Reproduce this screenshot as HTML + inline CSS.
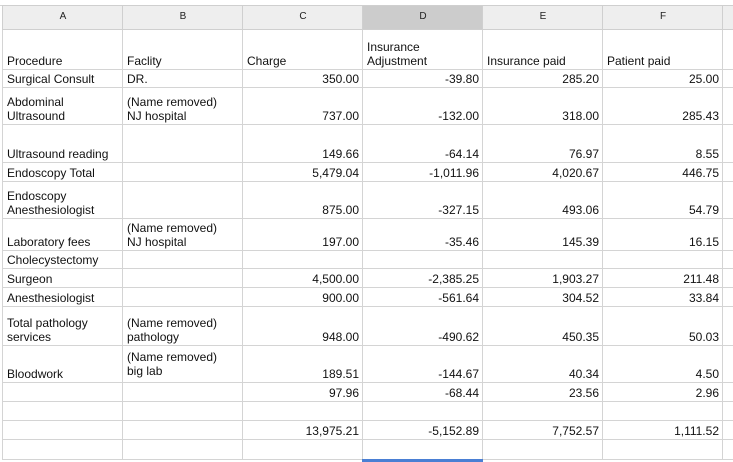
<!DOCTYPE html>
<html><head><meta charset="utf-8"><style>
html,body{margin:0;padding:0;background:#fff;width:733px;height:462px;overflow:hidden;font-family:"Liberation Sans",Arial,sans-serif;font-size:12px;color:#111}
table{position:absolute;left:2px;top:5px;border-collapse:collapse;table-layout:fixed;width:750px}
td{border:1px solid #d4d4d4;padding:0 3px 1px 4px;vertical-align:bottom;line-height:14px;white-space:nowrap;overflow:hidden}
td.n{text-align:right;padding-right:3px}
tr.h td{background:#eeeeee;text-align:center;vertical-align:middle;font-size:10px;color:#222;border-color:#cfcfcf}
tr.h td.sel{background:#cccccc}
.top{position:absolute;left:0;top:0;width:733px;height:5px;background:#fff;border-bottom:1px solid #d4d4d4}
.blue{position:absolute;left:362px;top:459px;width:121px;height:3px;background:#4a7fd4}
</style></head><body>
<div class="top"></div>
<table>
<colgroup><col style="width:120px"><col style="width:120px"><col style="width:120px"><col style="width:120px"><col style="width:120px"><col style="width:120px"><col style="width:30px"></colgroup>
<tr class="h" style="height:24px"><td>A</td><td>B</td><td>C</td><td class="sel">D</td><td>E</td><td>F</td><td></td></tr>
<tr style="height:40px"><td>Procedure</td><td>Faclity</td><td>Charge</td><td>Insurance<br>Adjustment</td><td>Insurance paid</td><td>Patient paid</td><td></td></tr>
<tr style="height:18px"><td>Surgical Consult</td><td>DR.</td><td class="n">350.00</td><td class="n">-39.80</td><td class="n">285.20</td><td class="n">25.00</td><td></td></tr>
<tr style="height:37px"><td>Abdominal<br>Ultrasound</td><td>(Name removed)<br>NJ hospital</td><td class="n">737.00</td><td class="n">-132.00</td><td class="n">318.00</td><td class="n">285.43</td><td></td></tr>
<tr style="height:38px"><td>Ultrasound reading</td><td></td><td class="n">149.66</td><td class="n">-64.14</td><td class="n">76.97</td><td class="n">8.55</td><td></td></tr>
<tr style="height:19px"><td>Endoscopy Total</td><td></td><td class="n">5,479.04</td><td class="n">-1,011.96</td><td class="n">4,020.67</td><td class="n">446.75</td><td></td></tr>
<tr style="height:37px"><td>Endoscopy<br>Anesthesiologist</td><td></td><td class="n">875.00</td><td class="n">-327.15</td><td class="n">493.06</td><td class="n">54.79</td><td></td></tr>
<tr style="height:32px"><td>Laboratory fees</td><td>(Name removed)<br>NJ hospital</td><td class="n">197.00</td><td class="n">-35.46</td><td class="n">145.39</td><td class="n">16.15</td><td></td></tr>
<tr style="height:18px"><td>Cholecystectomy</td><td></td><td></td><td></td><td></td><td></td><td></td></tr>
<tr style="height:19px"><td>Surgeon</td><td></td><td class="n">4,500.00</td><td class="n">-2,385.25</td><td class="n">1,903.27</td><td class="n">211.48</td><td></td></tr>
<tr style="height:19px"><td>Anesthesiologist</td><td></td><td class="n">900.00</td><td class="n">-561.64</td><td class="n">304.52</td><td class="n">33.84</td><td></td></tr>
<tr style="height:39px"><td>Total pathology<br>services</td><td>(Name removed)<br>pathology</td><td class="n">948.00</td><td class="n">-490.62</td><td class="n">450.35</td><td class="n">50.03</td><td></td></tr>
<tr style="height:37px"><td>Bloodwork</td><td style="vertical-align:top;padding-top:4px">(Name removed)<br>big lab</td><td class="n">189.51</td><td class="n">-144.67</td><td class="n">40.34</td><td class="n">4.50</td><td></td></tr>
<tr style="height:19px"><td></td><td></td><td class="n">97.96</td><td class="n">-68.44</td><td class="n">23.56</td><td class="n">2.96</td><td></td></tr>
<tr style="height:19px"><td></td><td></td><td></td><td></td><td></td><td></td><td></td></tr>
<tr style="height:19px"><td></td><td></td><td class="n">13,975.21</td><td class="n">-5,152.89</td><td class="n">7,752.57</td><td class="n">1,111.52</td><td></td></tr>
<tr style="height:20px"><td></td><td></td><td></td><td></td><td></td><td></td><td></td></tr>
</table>
<div class="blue"></div>
</body></html>
